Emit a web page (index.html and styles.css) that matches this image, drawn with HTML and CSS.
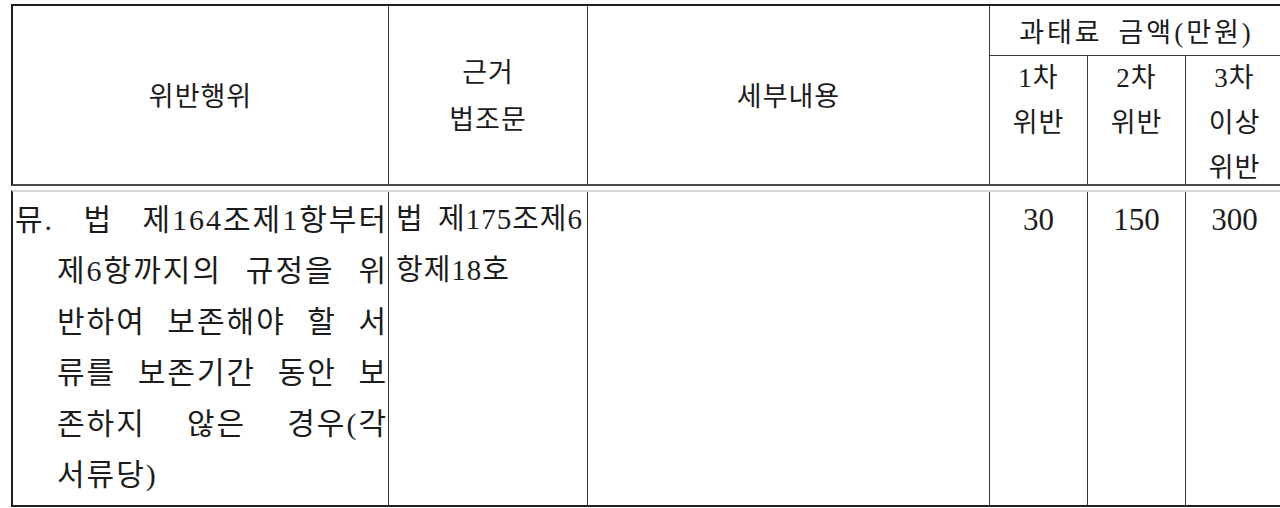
FILE: index.html
```html
<!DOCTYPE html>
<html lang="ko">
<head>
<meta charset="utf-8">
<title>과태료 기준</title>
<link rel="stylesheet" href="styles.css">
</head>
<body>
<div class="page">
  <div class="thead">
    <div class="hc span2">위반행위</div>
    <div class="hc span2 two">근거<br>법조문</div>
    <div class="hc span2">세부내용</div>
    <div class="hc fine">과태료 금액(만원)</div>
    <div class="hc sub">1차<br>위반</div>
    <div class="hc sub">2차<br>위반</div>
    <div class="hc sub">3차<br>이상<br>위반</div>
  </div>
  <div class="tbody">
    <div class="bc act">
      <div class="ln">뮤. 법 제164조제1항부터</div>
      <div class="ln ind">제6항까지의 규정을 위</div>
      <div class="ln ind">반하여 보존해야 할 서</div>
      <div class="ln ind">류를 보존기간 동안 보</div>
      <div class="ln ind">존하지 않은 경우(각</div>
      <div class="ln ind end">서류당)</div>
    </div>
    <div class="bc law">
      <div class="ln">법 제175조제6</div>
      <div class="ln end">항제18호</div>
    </div>
    <div class="bc det"></div>
    <div class="bc num">30</div>
    <div class="bc num">150</div>
    <div class="bc num">300</div>
  </div>
</div>
</body>
</html>
```
FILE: styles.css
```css
html, body {
  margin: 0;
  padding: 0;
  background: #ffffff;
  overflow: hidden;
}
body {
  width: 1280px;
  height: 508px;
  font-family: "Liberation Serif", "Noto Sans CJK KR", serif;
  color: #1c1c1c;
}
.page {
  padding: 4px 0 0 11px;
  width: 1300px;
}
.thead {
  display: grid;
  grid-template-columns: 376px 199px 402px 98px 98px 98px;
  grid-template-rows: 50px 128px;
  width: 1273px;
  box-sizing: border-box;
  border-top: 2px solid #202020;
  border-left: 2px solid #202020;
  border-bottom: 2px solid #4a4a4a;
}
.hc {
  box-sizing: border-box;
  border-right: 1px solid #3a3a3a;
  font-size: 27px;
  letter-spacing: 1px;
  text-align: center;
}
.span2 {
  grid-row: span 2;
  display: flex;
  align-items: center;
  justify-content: center;
  line-height: 47px;
  padding-top: 4px;
}
.fine {
  grid-column: span 3;
  border-bottom: 1px solid #3a3a3a;
  display: flex;
  align-items: center;
  justify-content: center;
  letter-spacing: 3px;
  word-spacing: 6px;
}
.sub {
  line-height: 45px;
  padding-top: 0;
}
.tbody {
  display: grid;
  grid-template-columns: 376px 199px 402px 98px 98px 98px;
  grid-template-rows: 313px;
  width: 1273px;
  box-sizing: border-box;
  margin-top: 4px;
  border-top: 2px solid #d6d6d6;
  border-left: 2px solid #202020;
  border-bottom: 2px solid #202020;
}
.bc {
  box-sizing: border-box;
  border-right: 1px solid #333333;
  font-size: 29px;
  letter-spacing: 1px;
  line-height: 51px;
  padding-top: 2px;
}
.act {
  padding-left: 2px;
  padding-right: 0;
  font-size: 30px;
  letter-spacing: 2px;
}
.law {
  padding-left: 7px;
  padding-right: 4px;
}
.ln {
  text-align: justify;
  text-align-last: justify;
  white-space: nowrap;
}
.ln.ind {
  margin-left: 42px;
}
.ln.end {
  text-align-last: left;
}
.num {
  text-align: center;
  font-size: 31px;
  letter-spacing: 0;
}
```
